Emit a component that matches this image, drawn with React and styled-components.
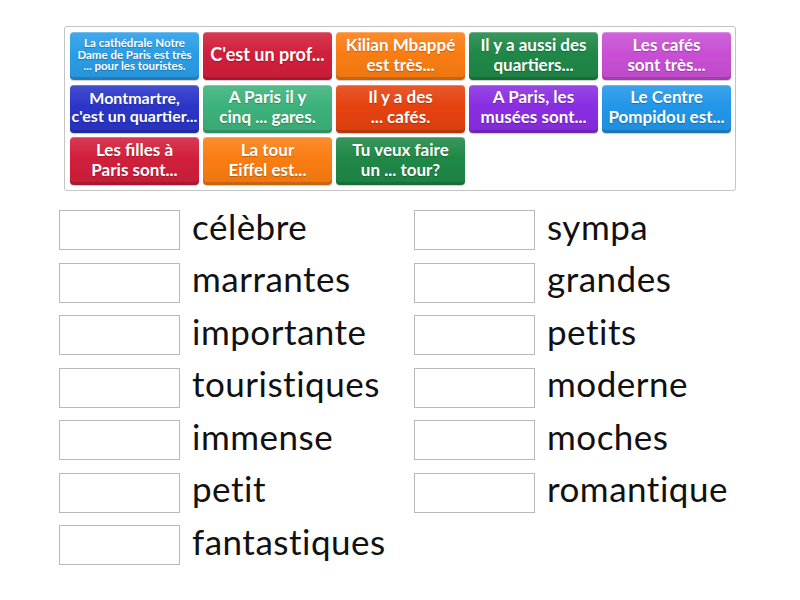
import React from 'react';
import styled, { createGlobalStyle } from 'styled-components';

const GlobalStyle = createGlobalStyle`
  html, body {
    margin: 0;
    padding: 0;
    background: #ffffff;
  }
  body {
    font-family: Lato, "Open Sans", sans-serif;
  }
`;

const tiles = [
  { text: ['La cathédrale Notre', 'Dame de Paris est très', '... pour les touristes.'], color: '#2a9de6', size: 11.5 },
  { text: ["C'est un prof..."], color: '#d11f3b', size: 18 },
  { text: ['Kilian Mbappé', 'est très...'], color: '#fa7d12', size: 17 },
  { text: ['Il y a aussi des', 'quartiers...'], color: '#1f8847', size: 17 },
  { text: ['Les cafés', 'sont très...'], color: '#c84fd4', size: 17 },
  { text: ['Montmartre,', "c'est un quartier..."], color: '#2a35c8', size: 16 },
  { text: ['A Paris il y', 'cinq ... gares.'], color: '#3cb27b', size: 17 },
  { text: ['Il y a des', '... cafés.'], color: '#e6420f', size: 17 },
  { text: ['A Paris, les', 'musées sont...'], color: '#892ee2', size: 17 },
  { text: ['Le Centre', 'Pompidou est...'], color: '#2296e8', size: 17 },
  { text: ['Les filles à', 'Paris sont...'], color: '#d11f3b', size: 17 },
  { text: ['La tour', 'Eiffel est...'], color: '#fa7d12', size: 17 },
  { text: ['Tu veux faire', 'un ... tour?'], color: '#1f8847', size: 17 },
];

const leftWords = ['célèbre', 'marrantes', 'importante', 'touristiques', 'immense', 'petit', 'fantastiques'];
const rightWords = ['sympa', 'grandes', 'petits', 'moderne', 'moches', 'romantique'];

function App() {
  return (
    <Page>
      <GlobalStyle />
      <Bank>
        {tiles.map((t, i) => (
          <Tile key={i} $color={t.color} $size={t.size}>
            {t.text.map((line, j) => (
              <Line key={j}>{line}</Line>
            ))}
          </Tile>
        ))}
      </Bank>
      <Answers>
        <Column>
          {leftWords.map((w) => (
            <Row key={w}>
              <DropBox />
              <Word>{w}</Word>
            </Row>
          ))}
        </Column>
        <Column>
          {rightWords.map((w) => (
            <Row key={w}>
              <DropBox />
              <Word>{w}</Word>
            </Row>
          ))}
        </Column>
      </Answers>
    </Page>
  );
}

export default App;

const Page = styled.div`
  width: 800px;
  height: 600px;
  padding-top: 26px;
  box-sizing: border-box;
  overflow: hidden;
`;

const Bank = styled.div`
  width: 672px;
  box-sizing: border-box;
  margin: 0 auto;
  padding: 5px;
  border: 1px solid #c4c4c4;
  border-radius: 3px;
  display: grid;
  grid-template-columns: repeat(5, 129px);
  grid-auto-rows: 48px;
  column-gap: 4px;
  row-gap: 4.5px;
`;

const Tile = styled.div`
  box-sizing: border-box;
  border-radius: 4px;
  background: ${(p) => p.$color};
  background-image: linear-gradient(
    to bottom,
    rgba(255, 255, 255, 0.12),
    rgba(255, 255, 255, 0) 45%,
    rgba(0, 0, 0, 0.06)
  );
  box-shadow: inset 0 1px 0 rgba(255, 255, 255, 0.25), inset 0 -3px 0 rgba(0, 0, 0, 0.15),
    0 1px 1px rgba(0, 0, 0, 0.2);
  color: #ffffff;
  font-family: Lato, "Open Sans", sans-serif;
  font-weight: 700;
  font-size: ${(p) => p.$size}px;
  line-height: ${(p) => (p.$size < 14 ? 1.04 : 1.15)};
  text-align: center;
  text-shadow: 0 1px 1px rgba(0, 0, 0, 0.25);
  display: flex;
  flex-direction: column;
  align-items: center;
  justify-content: center;
  padding: 0 2px 3px;
  white-space: nowrap;
`;

const Line = styled.span`
  display: block;
`;

const Answers = styled.div`
  display: flex;
  padding-left: 59px;
  margin-top: 19px;
`;

const Column = styled.div`
  width: 355px;
  display: flex;
  flex-direction: column;
  gap: 12.5px;
`;

const Row = styled.div`
  display: flex;
  align-items: flex-start;
  height: 40px;
`;

const DropBox = styled.div`
  width: 121px;
  height: 40px;
  box-sizing: border-box;
  border: 1px solid #b9b9b9;
  background: #ffffff;
  flex-shrink: 0;
`;

const Word = styled.div`
  margin-left: 12px;
  margin-top: -4.5px;
  font-family: Lato, "Open Sans", sans-serif;
  font-size: 35px;
  letter-spacing: 0.5px;
  line-height: 40px;
  color: #111111;
  white-space: nowrap;
`;
